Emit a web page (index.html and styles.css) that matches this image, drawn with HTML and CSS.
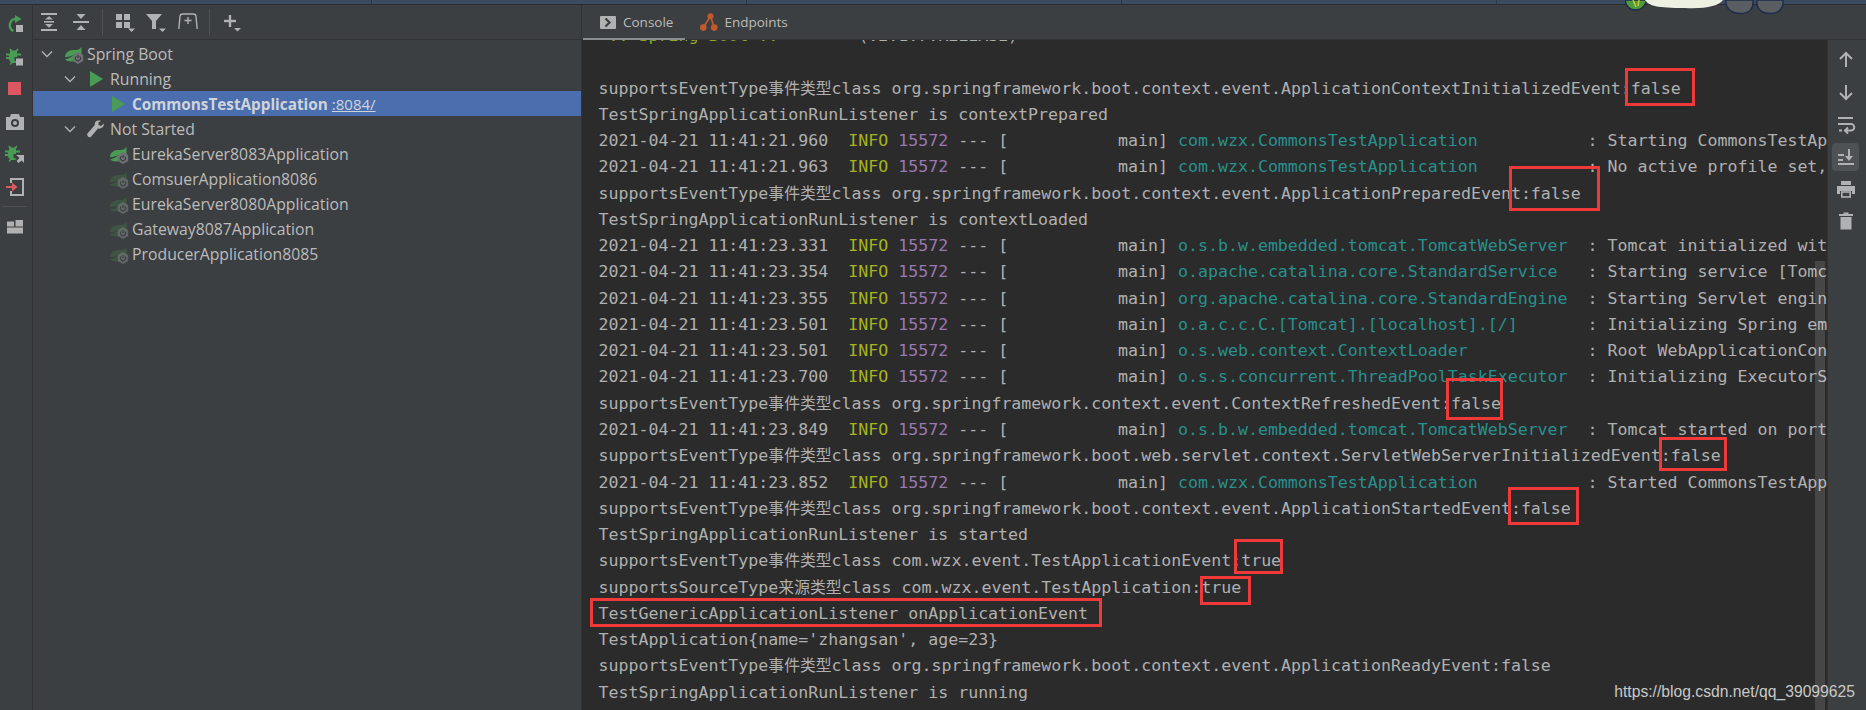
FILE: index.html
```html
<!DOCTYPE html>
<html lang="en">
<head>
  <meta charset="UTF-8" />
  <title>Services</title>
  <link rel="stylesheet" href="styles.css">
</head>
<body>
  <svg width="0" height="0" class="defs">
    <defs>
      <symbol id="spring" viewBox="0 0 20 20">
        <path d="M1 11 C1 6 6 3.5 11 4 C14 4.2 16 3 17.5 1 L17.5 9 L11 15 C6 16 3 15.5 1 13 C4 13 8 11 10 8.5 C7 10.5 4 11 1 11 Z"/>
      </symbol>
      <symbol id="gear" viewBox="0 0 12 12">
        <path class="hex" d="M6 0 L11.2 3 V9 L6 12 L0.8 9 V3 Z"/>
        <path class="pwr" d="M4.2 4.4 A2.6 2.6 0 1 0 7.8 4.4 M6 3 V6"/>
      </symbol>
    </defs>
  </svg>

  <div class="topbar">
    <div class="mascot">
      <svg width="160" height="15" viewBox="0 0 160 15">
        <path d="M0 0 C1 6 5 10 11 10 C16 10 20 6 22 0 Z" fill="#4f9a3c" stroke="#1c2c4a" stroke-width="1.4"/>
        <path d="M8 0 L11 7 M14 0 L13 6" stroke="#c7c83c" stroke-width="1.5"/>
        <path d="M20 0 C24 6 32 8 60 8 C80 9 94 6 98 0 Z" fill="#eef1e2"/>
        <path d="M101 0 C100 8 106 13.5 116 13.5 C124 13.5 129 9 128 0 Z" fill="#5a5e63" stroke="#1c2c4a" stroke-width="1.4"/>
        <path d="M132 0 C131 8 135 13.5 146 13.5 C154 13.5 159 8 158 0 Z" fill="#5a5e63" stroke="#1c2c4a" stroke-width="1.4"/>
      </svg>
    </div>
  </div>

  <div class="workspace">
    <div class="side-toolbar">
      <button class="side-btn">
        <svg width="18" height="18" viewBox="0 0 18 18" fill="none">
          <path d="M7.5 16 A6.5 6.5 0 0 1 9 3.8" stroke="#499c54" stroke-width="2.4"/>
          <path d="M9 0 L15.5 4 L9 8 Z" fill="#499c54"/>
          <rect x="10" y="10" width="7" height="7" fill="#afb1b3"/>
        </svg>
      </button>
      <button class="side-btn">
        <svg width="18" height="18" viewBox="0 0 18 18">
          <path fill="#499c54" d="M4.5 0.5 L6.5 2.5 H9.5 L11.5 0.5 L12.5 1.5 L11 3.5 V5.5 H15 V7.5 H11 V9 H8.5 V13 H10.5 V15 H6.5 L4.5 17 L3.5 16 L5 14 C3.5 13 3 12 3 11 H0 V9 H3 V7.5 H0 V5.5 H4 V3.5 L3.5 1.5 Z"/>
          <rect x="10" y="10.5" width="7" height="7" fill="#afb1b3"/>
        </svg>
      </button>
      <button class="side-btn">
        <svg width="14" height="14" viewBox="0 0 14 14"><rect width="13" height="13" fill="#db5860"/></svg>
      </button>
      <button class="side-btn">
        <svg width="18" height="16" viewBox="0 0 18 16">
          <path fill="#afb1b3" fill-rule="evenodd" d="M0 3 H4 L5 0 H13 L14 3 H18 V16 H0 Z M9 5 A4 4 0 1 0 9 13 A4 4 0 1 0 9 5 Z"/>
          <circle cx="9" cy="9" r="2" fill="#afb1b3"/>
        </svg>
      </button>
      <button class="side-btn">
        <svg width="19" height="18" viewBox="0 0 19 18">
          <path fill="#499c54" d="M4.5 0.5 L6.5 2.5 H9.5 L11.5 0.5 L12.5 1.5 L11 3.5 V5.5 H15 V7.5 H11 V9 H8.5 V13 H10.5 V15 H6.5 L4.5 17 L3.5 16 L5 14 C3.5 13 3 12 3 11 H0 V9 H3 V7.5 H0 V5.5 H4 V3.5 L3.5 1.5 Z"/>
          <path fill="#afb1b3" d="M11 10 H19 V18 L16.8 15.4 L13.5 18 L11.6 16 L14.6 12.8 Z"/>
        </svg>
      </button>
      <button class="side-btn">
        <svg width="18" height="18" viewBox="0 0 18 18" fill="none">
          <path d="M5 5 V1 H17 V17 H5 V13" stroke="#afb1b3" stroke-width="2"/>
          <path d="M0 8 H6 V4.5 L11.5 9 L6 13.5 V10 H0 Z" fill="#db5860"/>
        </svg>
      </button>
      <div class="side-sep"></div>
      <button class="side-btn">
        <svg width="16" height="14" viewBox="0 0 16 14" fill="#afb1b3">
          <rect x="0" y="1.5" width="7" height="5"/><rect x="8.5" y="0" width="7.5" height="6.5"/><rect x="0" y="7.5" width="16" height="6"/>
        </svg>
      </button>
    </div>

    <div class="tree-panel">
      <div class="tree-toolbar">
        <svg class="tb-icon" width="20" height="20" viewBox="0 0 20 20" fill="#afb1b3">
          <rect x="2" y="1" width="16" height="2"/><rect x="2" y="17" width="16" height="2"/><rect x="5" y="9" width="10" height="1.6"/>
          <path d="M10 4.2 L14 7.6 H6 Z M10 15.8 L14 12 H6 Z"/>
        </svg>
        <svg class="tb-icon" width="20" height="20" viewBox="0 0 20 20" fill="#afb1b3">
          <rect x="2" y="9" width="16" height="2"/><path d="M5.5 2 H14.5 L10 7 Z M5.5 18 H14.5 L10 13 Z"/>
        </svg>
        <span class="tb-sep"></span>
        <svg class="tb-icon" width="20" height="20" viewBox="0 0 20 20" fill="#afb1b3">
          <rect x="1" y="2" width="6" height="6"/><rect x="9" y="2" width="6" height="6"/><rect x="1" y="10" width="6" height="6"/><rect x="9" y="10" width="6" height="6"/>
          <path d="M13 16.5 H20 L16.5 20 Z"/>
        </svg>
        <svg class="tb-icon" width="20" height="20" viewBox="0 0 20 20" fill="#afb1b3">
          <path d="M0 2 H16 L10 9 V17 H6 V9 Z M13 16.5 H20 L16.5 20 Z"/>
        </svg>
        <svg class="tb-icon" width="20" height="20" viewBox="0 0 20 20" fill="none" stroke="#afb1b3" stroke-width="1.4">
          <path d="M0.8 17 L2 4.5 Q2.2 2 4.5 2 H15.5 Q17.8 2 18 4.5 L19.2 17"/><path d="M10 5 V12 M6.5 8.5 H13.5"/>
        </svg>
        <span class="tb-sep"></span>
        <svg class="tb-icon" width="20" height="20" viewBox="0 0 20 20" fill="#afb1b3">
          <rect x="2" y="7.8" width="12" height="2.4"/><rect x="6.8" y="3" width="2.4" height="12"/><path d="M12 16 H19 L15.5 19.5 Z"/>
        </svg>
      </div>
      <ul class="tree">
        <li class="tree-row depth-0">
          <svg class="chevron" width="12" height="12" viewBox="0 0 12 12"><path d="M1 3.5 L6 8.5 L11 3.5"/></svg>
          <span class="app-icon"><svg class="leaf" width="20" height="20"><use href="#spring"/></svg><svg class="gear" width="12" height="12"><use href="#gear"/></svg></span>
          <span class="tree-label">Spring Boot</span>
        </li>
        <li class="tree-row depth-1">
          <svg class="chevron" width="12" height="12" viewBox="0 0 12 12"><path d="M1 3.5 L6 8.5 L11 3.5"/></svg>
          <svg class="status-icon" width="13" height="16" viewBox="0 0 13 16"><path d="M0 0 L13 8 L0 16 Z" fill="#499c54"/></svg>
          <span class="tree-label">Running</span>
        </li>
        <li class="tree-row depth-2 selected">
          <svg class="status-icon" width="13" height="16" viewBox="0 0 13 16"><path d="M0 0 L13 8 L0 16 Z" fill="#499c54"/></svg>
          <span class="tree-label"><b>CommonsTestApplication</b> <span class="port">:8084/</span></span>
        </li>
        <li class="tree-row depth-1">
          <svg class="chevron" width="12" height="12" viewBox="0 0 12 12"><path d="M1 3.5 L6 8.5 L11 3.5"/></svg>
          <svg class="status-icon wrench" width="18" height="18" viewBox="0 0 18 18"><path fill="#afb1b3" d="M11.5 0.5 C9 0.5 7.4 2.6 7.8 5 L0.5 13.5 C-0.2 14.5 0.2 15.5 1 16.5 C2 17.5 3 17.6 4 16.7 L11 8.6 C14.4 9.2 17 7 17 3.5 L14 6 L11.5 5 L11.5 2.5 L14 0.8 C13.2 0.6 12.4 0.5 11.5 0.5 Z"/></svg>
          <span class="tree-label">Not Started</span>
        </li>
        <li class="tree-row depth-2">
          <span class="app-icon"><svg class="leaf" width="20" height="20"><use href="#spring"/></svg><svg class="gear" width="12" height="12"><use href="#gear"/></svg></span>
          <span class="tree-label">EurekaServer8083Application</span>
        </li>
        <li class="tree-row depth-2">
          <span class="app-icon off"><svg class="leaf" width="20" height="20"><use href="#spring"/></svg><svg class="gear" width="12" height="12"><use href="#gear"/></svg></span>
          <span class="tree-label">ComsuerApplication8086</span>
        </li>
        <li class="tree-row depth-2">
          <span class="app-icon off"><svg class="leaf" width="20" height="20"><use href="#spring"/></svg><svg class="gear" width="12" height="12"><use href="#gear"/></svg></span>
          <span class="tree-label">EurekaServer8080Application</span>
        </li>
        <li class="tree-row depth-2">
          <span class="app-icon off"><svg class="leaf" width="20" height="20"><use href="#spring"/></svg><svg class="gear" width="12" height="12"><use href="#gear"/></svg></span>
          <span class="tree-label">Gateway8087Application</span>
        </li>
        <li class="tree-row depth-2">
          <span class="app-icon off"><svg class="leaf" width="20" height="20"><use href="#spring"/></svg><svg class="gear" width="12" height="12"><use href="#gear"/></svg></span>
          <span class="tree-label">ProducerApplication8085</span>
        </li>
      </ul>
    </div>

    <div class="console-panel">
      <div class="tabs">
        <div class="tab active">
          <svg width="16" height="13" viewBox="0 0 16 13"><rect width="16" height="13" rx="1" fill="#afb1b3"/><path d="M5.5 2.5 L9.5 6.5 L5.5 10.5" fill="none" stroke="#3c3f41" stroke-width="2.2"/></svg>
          <span>Console</span>
        </div>
        <div class="tab tab-endpoints">
          <svg width="18" height="18" viewBox="0 0 18 18" fill="none">
            <path d="M3.2 14.5 L10.5 3.2 L14.2 14.5" stroke="#c2592c" stroke-width="1.6"/>
            <circle cx="10.5" cy="3.2" r="3" fill="#c2592c"/><circle cx="3.3" cy="14.6" r="3.3" fill="#c2592c"/><circle cx="14.2" cy="14.6" r="3.3" fill="#c2592c"/>
          </svg>
          <span>Endpoints</span>
        </div>
      </div>
      <div class="console-body">
        <div class="log-wrap">
          <pre class="log"><span class="boot"> :: Spring Boot ::</span>        (v2.1.7.RELEASE)

supportsEventType<span class="cjk">事件类型</span>class org.springframework.boot.context.event.ApplicationContextInitializedEvent:false
TestSpringApplicationRunListener is contextPrepared
2021-04-21 11:41:21.960  <span class="lvl">INFO</span> <span class="pid">15572</span> --- [           main] <span class="src">com.wzx.CommonsTestApplication          </span> : Starting CommonsTestApplication on DESKTOP with PID 15572
2021-04-21 11:41:21.963  <span class="lvl">INFO</span> <span class="pid">15572</span> --- [           main] <span class="src">com.wzx.CommonsTestApplication          </span> : No active profile set, falling back to default profiles: default
supportsEventType<span class="cjk">事件类型</span>class org.springframework.boot.context.event.ApplicationPreparedEvent:false
TestSpringApplicationRunListener is contextLoaded
2021-04-21 11:41:23.331  <span class="lvl">INFO</span> <span class="pid">15572</span> --- [           main] <span class="src">o.s.b.w.embedded.tomcat.TomcatWebServer </span> : Tomcat initialized with port(s): 8084 (http)
2021-04-21 11:41:23.354  <span class="lvl">INFO</span> <span class="pid">15572</span> --- [           main] <span class="src">o.apache.catalina.core.StandardService  </span> : Starting service [Tomcat]
2021-04-21 11:41:23.355  <span class="lvl">INFO</span> <span class="pid">15572</span> --- [           main] <span class="src">org.apache.catalina.core.StandardEngine </span> : Starting Servlet engine: [Apache Tomcat/9.0.22]
2021-04-21 11:41:23.501  <span class="lvl">INFO</span> <span class="pid">15572</span> --- [           main] <span class="src">o.a.c.c.C.[Tomcat].[localhost].[/]      </span> : Initializing Spring embedded WebApplicationContext
2021-04-21 11:41:23.501  <span class="lvl">INFO</span> <span class="pid">15572</span> --- [           main] <span class="src">o.s.web.context.ContextLoader           </span> : Root WebApplicationContext: initialization completed
2021-04-21 11:41:23.700  <span class="lvl">INFO</span> <span class="pid">15572</span> --- [           main] <span class="src">o.s.s.concurrent.ThreadPoolTaskExecutor </span> : Initializing ExecutorService 'applicationTaskExecutor'
supportsEventType<span class="cjk">事件类型</span>class org.springframework.context.event.ContextRefreshedEvent:false
2021-04-21 11:41:23.849  <span class="lvl">INFO</span> <span class="pid">15572</span> --- [           main] <span class="src">o.s.b.w.embedded.tomcat.TomcatWebServer </span> : Tomcat started on port(s): 8084 (http) with context path ''
supportsEventType<span class="cjk">事件类型</span>class org.springframework.boot.web.servlet.context.ServletWebServerInitializedEvent:false
2021-04-21 11:41:23.852  <span class="lvl">INFO</span> <span class="pid">15572</span> --- [           main] <span class="src">com.wzx.CommonsTestApplication          </span> : Started CommonsTestApplication in 2.3 seconds
supportsEventType<span class="cjk">事件类型</span>class org.springframework.boot.context.event.ApplicationStartedEvent:false
TestSpringApplicationRunListener is started
supportsEventType<span class="cjk">事件类型</span>class com.wzx.event.TestApplicationEvent:true
supportsSourceType<span class="cjk">来源类型</span>class com.wzx.event.TestApplication:true
TestGenericApplicationListener onApplicationEvent
TestApplication{name='zhangsan', age=23}
supportsEventType<span class="cjk">事件类型</span>class org.springframework.boot.context.event.ApplicationReadyEvent:false
TestSpringApplicationRunListener is running</pre>
        </div>
        <div class="scrollbar"></div>
        <div class="console-actions">
          <svg width="20" height="20" viewBox="0 0 20 20" fill="none" stroke="#afb1b3" stroke-width="2"><path d="M10 17 V3 M4 9 L10 3 L16 9"/></svg>
          <svg width="20" height="20" viewBox="0 0 20 20" fill="none" stroke="#afb1b3" stroke-width="2"><path d="M10 3 V17 M4 11 L10 17 L16 11"/></svg>
          <svg width="20" height="20" viewBox="0 0 20 20" fill="none" stroke="#afb1b3" stroke-width="2"><path d="M2 3 H17 M2 9 H15 A3.2 3.2 0 0 1 15 15.5 H9 M3 15.5 H6 M12 12.5 L9 15.5 L12 18.5"/></svg>
          <span class="action-on">
            <svg width="20" height="20" viewBox="0 0 20 20" fill="#afb1b3"><rect x="2" y="16" width="16" height="2"/><rect x="2" y="7" width="6" height="2"/><rect x="2" y="12" width="5" height="2"/><path d="M12 2 H14 V9 H17 L13 14 L9 9 H12 Z"/></svg>
          </span>
          <svg width="20" height="20" viewBox="0 0 20 20" fill="#afb1b3"><path d="M5 2 H15 V6 H5 Z M1 7 H19 V15 H16 V12 H4 V15 H1 Z"/><rect x="5.8" y="13" width="8.4" height="5" fill="none" stroke="#afb1b3" stroke-width="1.6"/></svg>
          <svg width="20" height="20" viewBox="0 0 20 20" fill="#afb1b3"><path d="M7.5 1.5 H12.5 V3 H17 V5 H3 V3 H7.5 Z M4.5 6 H15.5 V18.5 H4.5 Z"/></svg>
        </div>
        <span class="mark mark-context-init"></span>
        <span class="mark mark-prepared"></span>
        <span class="mark mark-refreshed"></span>
        <span class="mark mark-web-server"></span>
        <span class="mark mark-started"></span>
        <span class="mark mark-event-true"></span>
        <span class="mark mark-source-true"></span>
        <span class="mark mark-generic"></span>
        <span class="watermark">https://blog.csdn.net/qq_39099625</span>
      </div>
    </div>
  </div>
</body>
</html>
```

FILE: styles.css
```css
* {
  margin: 0;
  padding: 0;
  box-sizing: border-box;
}

html, body {
  height: 100%;
  overflow: hidden;
}

body {
  background: #3c3f41;
  color: #bbbbbb;
  font-family: 'Open Sans', 'Noto Sans', sans-serif;
  display: flex;
  flex-direction: column;
}

.defs {
  position: absolute;
}

.topbar {
  height: 5px;
  background: linear-gradient(90deg, #3b4c60 374px, #2e3844 374px) -3px 0 / 375px 100%;
  border-bottom: 1px solid #2b2d30;
  flex: none;
  position: relative;
}

.mascot {
  position: absolute;
  left: 1625px;
  top: 0;
  line-height: 0;
}

.workspace {
  flex: 1;
  display: flex;
  min-height: 0;
}

/* left icon strip */
.side-toolbar {
  width: 33px;
  flex: none;
  border-right: 1px solid #323232;
  display: flex;
  flex-direction: column;
  align-items: center;
  padding: 3px 3px 0 0;
}

.side-btn {
  background: none;
  border: none;
  width: 29px;
  height: 32.5px;
  flex: none;
  display: flex;
  align-items: center;
  justify-content: center;
}

.side-sep {
  width: 24px;
  height: 1px;
  background: #515151;
  margin: 3px 0 4px;
  flex: none;
}

/* run dashboard tree */
.tree-panel {
  width: 549px;
  flex: none;
  border-right: 1px solid #323232;
}

.tree-toolbar {
  height: 35px;
  display: flex;
  align-items: center;
  gap: 11.5px;
  padding-left: 6px;
  border-bottom: 1px solid #323232;
}

.tb-sep {
  width: 1px;
  height: 26px;
  background: #515151;
}

.tree {
  list-style: none;
  padding-top: 1px;
}

.tree-row {
  height: 25px;
  display: flex;
  align-items: center;
  font-size: 15.8px;
  color: #bbbbbb;
  white-space: nowrap;
}

.depth-0 { padding-left: 8px; }
.depth-1 { padding-left: 31px; }
.depth-2 { padding-left: 76px; }

.selected {
  background: #4b6eaf;
  color: #d0d4da;
}

.selected b {
  font-size: 15.3px;
}

.selected .port {
  font-size: 15px;
}

.port {
  text-decoration: underline;
}

.chevron {
  fill: none;
  stroke: #afb1b3;
  stroke-width: 1.4;
  margin-right: 11px;
}

.status-icon {
  margin-right: 7px;
  margin-left: 3px;
  flex: none;
}

.wrench {
  margin-left: 0;
  margin-right: 5px;
}

.app-icon {
  position: relative;
  width: 23px;
  height: 20px;
  flex: none;
}

.leaf {
  fill: #499c54;
  position: absolute;
  left: 0;
  top: 2px;
}

.gear {
  position: absolute;
  left: 8px;
  top: 8px;
}

.hex {
  fill: #6e7275;
}

.pwr {
  fill: none;
  stroke: #2f3133;
  stroke-width: 1;
}

.off .leaf {
  fill: #3f5543;
}

.off .gear {
  opacity: 0.75;
}

/* console */
.console-panel {
  flex: 1;
  min-width: 0;
  display: flex;
  flex-direction: column;
}

.tabs {
  height: 35px;
  flex: none;
  display: flex;
  border-bottom: 1px solid #323232;
  font-size: 13.5px;
}

.tab {
  display: flex;
  align-items: center;
  gap: 7px;
  padding: 0 12px 0 18px;
  position: relative;
}

.tab-endpoints {
  padding-left: 15px;
  gap: 6px;
}

.tab.active::after {
  content: '';
  position: absolute;
  left: 1px;
  right: 0;
  bottom: -1px;
  height: 2px;
  background: #8a8d8f;
}

.console-body {
  flex: 1;
  position: relative;
  display: flex;
  min-height: 0;
  background: #2b2b2b;
}

.log-wrap {
  flex: 1;
  min-width: 0;
  overflow: hidden;
}

.log {
  font-family: 'DejaVu Sans Mono', 'Noto Sans CJK SC', monospace;
  font-size: 16.6px;
  line-height: 26.27px;
  color: #b0b0b0;
  padding-left: 16.5px;
  margin-top: -17px;
  white-space: pre;
}

.cjk {
  font-family: 'Noto Sans CJK SC', sans-serif;
  font-size: 15.8px;
  line-height: 1;
}

.boot { color: #8fa82a; }
.lvl { color: #a5b41e; }
.pid { color: #9a78b0; }
.src { color: #28908f; }

.scrollbar {
  position: absolute;
  right: 41px;
  top: 221px;
  bottom: 0;
  width: 10px;
  background: rgba(255, 255, 255, 0.13);
}

.console-actions {
  width: 39px;
  flex: none;
  background: #3c3f41;
  border-left: 1px solid #323232;
  display: flex;
  flex-direction: column;
  align-items: center;
  gap: 12.3px;
  padding: 10px 3px 0 0;
}

.action-on {
  width: 27px;
  height: 28px;
  margin: -4px 0;
  background: #4e5254;
  border-radius: 4px;
  display: flex;
  align-items: center;
  justify-content: center;
}

/* red boxes drawn on the screenshot */
.mark {
  position: absolute;
  border: 3px solid #f03a3a;
}

.mark-context-init { left: 1043px; top: 28px; width: 70px; height: 38px; }
.mark-prepared { left: 927px; top: 126px; width: 91px; height: 45px; }
.mark-refreshed { left: 864px; top: 338px; width: 57px; height: 42px; }
.mark-web-server { left: 1077px; top: 397px; width: 68px; height: 34px; }
.mark-started { left: 926px; top: 447px; width: 71px; height: 38px; }
.mark-event-true { left: 652px; top: 499px; width: 49px; height: 35px; }
.mark-source-true { left: 618px; top: 536px; width: 51px; height: 29px; }
.mark-generic { left: 8px; top: 558px; width: 512px; height: 29px; }

.watermark {
  position: absolute;
  right: 11px;
  bottom: 9px;
  font-family: 'Liberation Sans', sans-serif;
  font-size: 15.7px;
  color: #c8c8c8;
}
```
